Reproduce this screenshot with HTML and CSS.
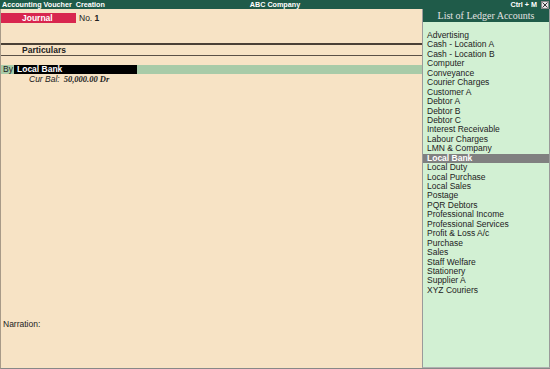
FILE: index.html
```html
<!DOCTYPE html>
<html>
<head>
<meta charset="utf-8">
<link rel="stylesheet" href="styles.css">
</head>
<body>
<div class="titlebar">
  <span class="tb-left">Accounting Voucher&nbsp; Creation</span>
  <span class="tb-center">ABC Company</span>
  <span class="tb-right">Ctrl + M</span>
  <span class="closebox">
    <svg width="6" height="6" viewBox="0 0 6 6"><path d="M0.5 0.5L5.5 5.5M5.5 0.5L0.5 5.5" stroke="#333" stroke-width="1"/></svg>
  </span>
</div>
<div class="main">
  <div class="voucher">
    <div class="jrow">
      <div class="jbox">Journal</div>
      <div class="jno">No. <b>1</b></div>
    </div>
    <div class="thickline"></div>
    <div class="partrow">Particulars</div>
    <div class="thinline"></div>
    <div class="byrow">
      <span class="by">By</span>
      <span class="ledger">Local Bank</span>
    </div>
    <div class="curbal"><span class="cb-label">Cur Bal:</span><span class="cb-val">50,000.00 Dr</span></div>
    <div class="narration">Narration:</div>
  </div>
  <div class="panel">
    <div class="panel-head">List of Ledger Accounts</div>
    <ul class="list">
      <li>Advertising</li>
      <li>Cash - Location A</li>
      <li>Cash - Location B</li>
      <li>Computer</li>
      <li>Conveyance</li>
      <li>Courier Charges</li>
      <li>Customer A</li>
      <li>Debtor A</li>
      <li>Debtor B</li>
      <li>Debtor C</li>
      <li>Interest Receivable</li>
      <li>Labour Charges</li>
      <li>LMN &amp; Company</li>
      <li class="sel">Local Bank</li>
      <li>Local Duty</li>
      <li>Local Purchase</li>
      <li>Local Sales</li>
      <li>Postage</li>
      <li>PQR Debtors</li>
      <li>Professional Income</li>
      <li>Professional Services</li>
      <li>Profit &amp; Loss A/c</li>
      <li>Purchase</li>
      <li>Sales</li>
      <li>Staff Welfare</li>
      <li>Stationery</li>
      <li>Supplier A</li>
      <li>XYZ Couriers</li>
    </ul>
  </div>
</div>
</body>
</html>
```
FILE: styles.css
```css
* { box-sizing: border-box; }
html, body { margin: 0; padding: 0; }
body {
  width: 550px;
  height: 369px;
  overflow: hidden;
  background: #f7e3c5;
  font-family: "Liberation Sans", Arial, sans-serif;
  font-size: 8.5px;
  color: #222;
}
.titlebar {
  height: 9px;
  background: #1f5b49;
  color: #fff;
  font-weight: bold;
  font-size: 7.2px;
  line-height: 9px;
  display: flex;
  align-items: center;
  position: relative;
  padding-left: 2px;
}
.tb-left { flex: 1; }
.tb-center { position: absolute; left: 0; right: 0; text-align: center; pointer-events: none; }
.tb-right { margin-right: 4px; }
.closebox {
  width: 8px;
  height: 8px;
  margin-right: 1px;
  background: #e4e4e4;
  border: 1px solid #888;
  display: flex;
  align-items: center;
  justify-content: center;
}
.closebox svg { display: block; }
.main {
  height: 360px;
  display: flex;
  border-left: 1px solid #a89a88;
  border-bottom: 1px solid #888;
}
.voucher {
  width: 421px;
  display: flex;
  flex-direction: column;
}
.jrow {
  margin-top: 4px;
  height: 10px;
  display: flex;
  align-items: center;
}
.jbox {
  width: 75px;
  height: 10px;
  background: #d8264f;
  color: #fff;
  font-weight: bold;
  line-height: 10px;
  padding-left: 21px;
}
.jno { margin-left: 3px; line-height: 10px; }
.thickline {
  margin-top: 20px;
  height: 2px;
  background: #4a4036;
}
.partrow {
  height: 10px;
  line-height: 10px;
  font-weight: bold;
  padding-left: 21px;
}
.thinline {
  height: 1px;
  background: #5a5046;
}
.byrow {
  margin-top: 9px;
  height: 9px;
  background: #a8cba8;
  display: flex;
  align-items: center;
  line-height: 9px;
}
.by { width: 13px; padding-left: 2px; }
.ledger {
  width: 123px;
  height: 9px;
  background: #000;
  color: #fff;
  font-weight: bold;
  padding-left: 3px;
}
.curbal {
  height: 10px;
  line-height: 11px;
  padding-left: 28px;
}
.cb-label { font-style: italic; margin-right: 4px; }
.cb-val {
  font-family: "Liberation Serif", "Times New Roman", serif;
  font-style: italic;
  font-weight: bold;
  font-size: 8.5px;
}
.narration {
  margin-top: auto;
  margin-bottom: 39px;
  padding-left: 2px;
  line-height: 10px;
}
.panel {
  width: 128px;
  background: #d2f0d3;
  border-left: 1px solid #9a9a9a;
  border-right: 1px solid #9a9a9a;
  border-bottom: 1px solid #b0b0b0;
}
.panel-head {
  height: 13px;
  background: #1f5b49;
  color: #e2e2e2;
  font-family: "Liberation Serif", "Times New Roman", serif;
  font-size: 10px;
  line-height: 13px;
  text-align: center;
}
.list {
  list-style: none;
  margin: 0;
  padding: 9px 0 0 0;
}
.list li {
  height: 9.45px;
  line-height: 9.45px;
  padding-left: 4px;
  white-space: nowrap;
}
.list li.sel {
  background: #808080;
  color: #fff;
  font-weight: bold;
}
```
